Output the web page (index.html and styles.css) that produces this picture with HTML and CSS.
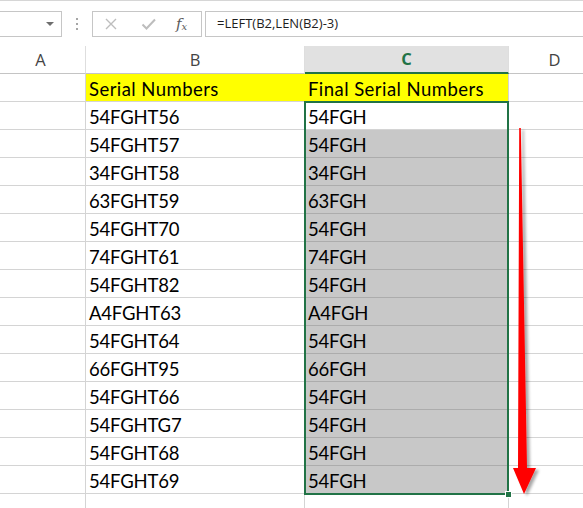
FILE: index.html
```html
<!DOCTYPE html>
<html>
<head>
<meta charset="utf-8">
<link rel="stylesheet" href="styles.css">
</head>
<body>
<div class="formula-bar">
  <div class="name-box"><span class="caret"></span></div>
  <div class="grip"><i></i><i></i><i></i></div>
  <div class="fx-box">
    <svg class="ico ico-x" width="14" height="14" viewBox="0 0 14 14"><path d="M2 2 L12 12 M12 2 L2 12" stroke="#bdbdbd" stroke-width="1.4" fill="none"/></svg>
    <svg class="ico ico-check" width="16" height="14" viewBox="0 0 16 14"><path d="M1.5 7.5 L5.5 11.5 L14 2.5" stroke="#bdbdbd" stroke-width="2" fill="none"/></svg>
    <span class="fx">f<sub>x</sub></span>
  </div>
  <div class="formula">=LEFT(B2,LEN(B2)-3)</div>
</div>
<div class="grid">
  <div class="hdr hdr-a">A</div><div class="hdr">B</div><div class="hdr hdr-sel">C</div><div class="hdr">D</div>

  <div class="c"></div><div class="c yel yel-b">Serial Numbers</div><div class="c yel">Final Serial Numbers</div><div class="c"></div>

  <div class="c"></div><div class="c">54FGHT56</div><div class="c">54FGH</div><div class="c"></div>
  <div class="c"></div><div class="c">54FGHT57</div><div class="c g">54FGH</div><div class="c"></div>
  <div class="c"></div><div class="c">34FGHT58</div><div class="c g">34FGH</div><div class="c"></div>
  <div class="c"></div><div class="c">63FGHT59</div><div class="c g">63FGH</div><div class="c"></div>
  <div class="c"></div><div class="c">54FGHT70</div><div class="c g">54FGH</div><div class="c"></div>
  <div class="c"></div><div class="c">74FGHT61</div><div class="c g">74FGH</div><div class="c"></div>
  <div class="c"></div><div class="c">54FGHT82</div><div class="c g">54FGH</div><div class="c"></div>
  <div class="c"></div><div class="c">A4FGHT63</div><div class="c g">A4FGH</div><div class="c"></div>
  <div class="c"></div><div class="c">54FGHT64</div><div class="c g">54FGH</div><div class="c"></div>
  <div class="c"></div><div class="c">66FGHT95</div><div class="c g">66FGH</div><div class="c"></div>
  <div class="c"></div><div class="c">54FGHT66</div><div class="c g">54FGH</div><div class="c"></div>
  <div class="c"></div><div class="c">54FGHTG7</div><div class="c g">54FGH</div><div class="c"></div>
  <div class="c"></div><div class="c">54FGHT68</div><div class="c g">54FGH</div><div class="c"></div>
  <div class="c"></div><div class="c">54FGHT69</div><div class="c g">54FGH</div><div class="c"></div>
  <div class="c"></div><div class="c"></div><div class="c"></div><div class="c"></div>
</div>
<div class="selection"><span class="handle"></span></div>
<svg class="arrow" width="60" height="390" viewBox="500 120 60 390">
  <defs>
    <filter id="sh" x="-50%" y="-5%" width="200%" height="110%">
      <feGaussianBlur in="SourceAlpha" stdDeviation="1.6"/>
      <feOffset dx="2.5" dy="1.5" result="b"/>
      <feComponentTransfer><feFuncA type="linear" slope="0.35"/></feComponentTransfer>
      <feMerge><feMergeNode/><feMergeNode in="SourceGraphic"/></feMerge>
    </filter>
  </defs>
  <path d="M519.2 128 L520.8 128 L527 468 L536 468 L524 494 L513 468 L518 468 Z" fill="#ff0000" filter="url(#sh)"/>
</svg>
</body>
</html>
```

FILE: styles.css
```css
html, body {
  margin: 0;
  padding: 0;
  background: #ffffff;
}
body {
  position: relative;
  width: 583px;
  height: 508px;
  overflow: hidden;
  font-family: "Lato", "Liberation Sans", sans-serif;
  color: #000;
}

.formula-bar {
  height: 46px;
  box-sizing: border-box;
  border-top: 1px solid #d6d6d6;
  padding-top: 10px;
  display: flex;
  align-items: flex-start;
}
.name-box {
  width: 62px;
  height: 26px;
  box-sizing: border-box;
  border: 1px solid #c6c6c6;
  border-left: none;
  position: relative;
  display: flex;
  align-items: center;
  justify-content: flex-end;
  padding-right: 7px;
}
.caret {
  width: 0;
  height: 0;
  border-left: 4px solid transparent;
  border-right: 4px solid transparent;
  border-top: 4px solid #6e6e6e;
}
.grip {
  width: 30px;
  height: 26px;
  display: flex;
  flex-direction: column;
  align-items: center;
  justify-content: center;
  gap: 3px;
}
.grip i {
  width: 2px;
  height: 2px;
  background: #a6a6a6;
  display: block;
}
.fx-box {
  width: 110px;
  height: 26px;
  box-sizing: border-box;
  border: 1px solid #c6c6c6;
  display: flex;
  align-items: center;
  padding-left: 11px;
}
.ico-x { margin-right: 23px; }
.ico-check { margin-right: 19px; }
.fx {
  font-family: "DejaVu Serif", "Liberation Serif", serif;
  font-style: italic;
  font-size: 15px;
  color: #5a5a5a;
  line-height: 1;
}
.fx sub {
  font-size: 10px;
  vertical-align: -1px;
}
.formula {
  flex: 1;
  margin-left: 3px;
  height: 26px;
  box-sizing: border-box;
  border: 1px solid #c6c6c6;
  border-right: none;
  padding-left: 11px;
  font-family: "Open Sans", "Liberation Sans", sans-serif;
  font-size: 13px;
  line-height: 23px;
  color: #1e1e1e;
}

.grid {
  display: grid;
  grid-template-columns: 86px 219px 204px 92px;
  grid-auto-rows: 28px;
}
.hdr {
  box-sizing: border-box;
  border-right: 1px solid #dedede;
  border-bottom: 1px solid #c4c4c4;
  font-family: "Open Sans", "Liberation Sans", sans-serif;
  font-size: 16.5px;
  line-height: 27px;
  text-align: center;
  color: #444;
}
.hdr-a { padding-right: 4px; }
.hdr-sel {
  background: #e1e1e1;
  color: #217346;
  font-weight: 700;
  border-bottom: 2px solid #217346;
  line-height: 26px;
}
.c {
  box-sizing: border-box;
  border-right: 1px solid #d4d4d4;
  border-bottom: 1px solid #d4d4d4;
  font-size: 18.5px;
  line-height: 25px;
  padding-top: 2.5px;
  padding-left: 3px;
  letter-spacing: -0.2px;
  white-space: nowrap;
  overflow: hidden;
}
.yel {
  background: #ffff00;
  letter-spacing: 0.45px;
}
.yel-b { border-right-color: #ffff00; }
.g {
  background: #c8c8c8;
  border-bottom-color: #acacac;
}

.selection {
  position: absolute;
  left: 304px;
  top: 101px;
  width: 205px;
  height: 394px;
  box-sizing: border-box;
  border: 2px solid #217346;
}
.handle {
  position: absolute;
  right: -5px;
  bottom: -5px;
  width: 5px;
  height: 5px;
  background: #217346;
  border: 1px solid #ffffff;
}
.arrow {
  position: absolute;
  left: 500px;
  top: 120px;
}
```
